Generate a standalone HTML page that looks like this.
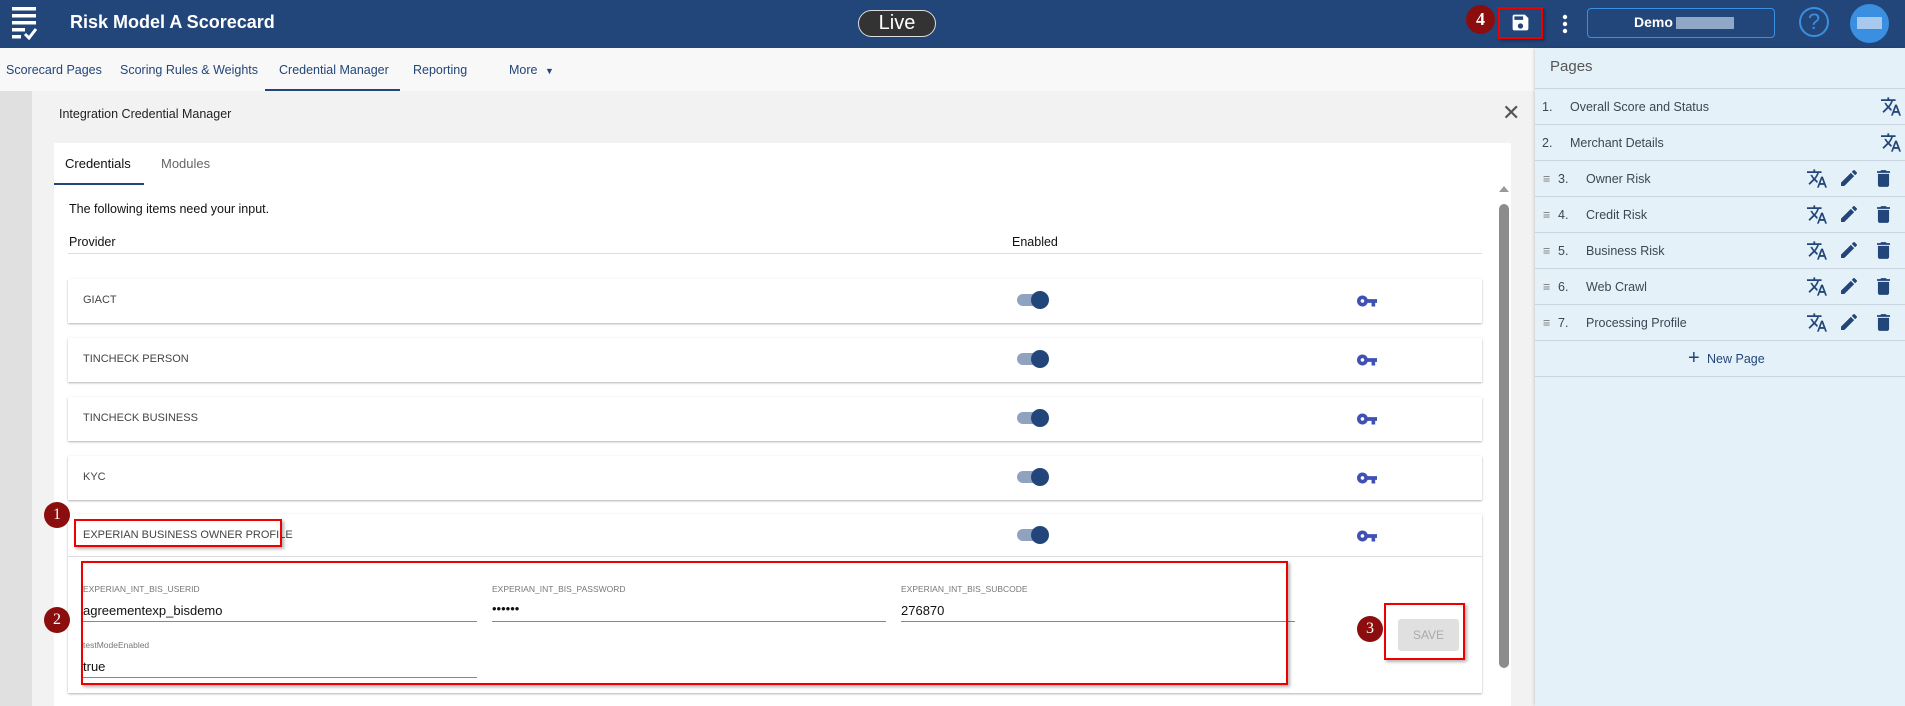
<!DOCTYPE html>
<html><head><meta charset="utf-8"><style>
*{box-sizing:border-box;margin:0;padding:0}
body{width:1905px;height:706px;overflow:hidden;font-family:"Liberation Sans",sans-serif;background:#f2f2f2;position:relative;color:#222}
.a{position:absolute}
.hdr{left:0;top:0;width:1905px;height:48px;background:#23467a}
.tabs{left:0;top:48px;width:1535px;height:43px;background:#f8f8f8}
.tab{position:absolute;top:63px;font-size:12.5px;color:#23467a;white-space:nowrap}
.card{position:absolute;left:68px;width:1414px;background:#fff;box-shadow:0 1px 2px rgba(0,0,0,.3)}
.card .n{position:absolute;left:15px;top:15px;font-size:11px;color:#444}
.tg{position:absolute;left:949px;width:32px;height:18px}
.tg:before{content:"";position:absolute;left:0;top:3px;width:28px;height:12px;border-radius:6px;background:#8fa3c0}
.tg:after{content:"";position:absolute;left:14px;top:0;width:18px;height:18px;border-radius:50%;background:#23467a}
.key{position:absolute;left:1289px}
.pr{position:absolute;left:1535px;width:370px;height:36px;border-bottom:1px solid #c9d6df;font-size:12.5px;color:#3c4654}
.pr span{position:absolute;top:11px}
.lbl{position:absolute;font-size:8.5px;color:#777}
.val{position:absolute;font-size:13px;color:#111}
.ul{position:absolute;height:1px;background:#888}
.red{position:absolute;border:2px solid #e00;box-shadow:2px 2px 3px rgba(0,0,0,.3)}
.bd{position:absolute;width:26px;height:26px;border-radius:50%;background:#8b0d0d;color:#fff;font-size:16px;text-align:center;line-height:26px;font-family:"Liberation Serif",serif}
</style></head><body>
<div class="a hdr"></div>
<svg class="a" style="left:12px;top:7px" width="32" height="34" viewBox="0 0 32 34"><g fill="#fff"><rect x="0" y="0" width="24" height="3.5"/><rect x="0" y="7" width="24" height="3.5"/><rect x="0" y="14" width="24" height="3.5"/><rect x="0" y="21" width="13" height="3.5"/><rect x="0" y="28" width="9" height="3.5"/></g><path d="M13 27l4 4 7-9" stroke="#fff" stroke-width="3" fill="none"/></svg>
<div class="a" style="left:70px;top:12px;color:#fff;font-size:18px;font-weight:bold">Risk Model A Scorecard</div>
<div class="a" style="left:858px;top:10px;width:78px;height:27px;border-radius:14px;background:#333;border:1px solid #ddd;color:#fff;font-size:20px;text-align:center;line-height:25px">Live</div>
<div class="bd" style="left:1466px;top:5px;width:29px;height:29px;line-height:29px;font-size:18px;font-weight:bold">4</div>
<div class="red" style="left:1498px;top:7px;width:45px;height:32px"></div>
<svg class="a" style="left:1510px;top:12px" width="21" height="21" viewBox="0 0 24 24"><path fill="#fff" d="M17 3H5a2 2 0 0 0-2 2v14a2 2 0 0 0 2 2h14c1.1 0 2-.9 2-2V7l-4-4zm-5 16c-1.66 0-3-1.34-3-3s1.34-3 3-3 3 1.34 3 3-1.34 3-3 3zm3-10H5V5h10v4z"/></svg>
<svg class="a" style="left:1561px;top:14px" width="8" height="20"><circle cx="4" cy="3" r="2.2" fill="#fff"/><circle cx="4" cy="10" r="2.2" fill="#fff"/><circle cx="4" cy="17" r="2.2" fill="#fff"/></svg>
<div class="a" style="left:1587px;top:8px;width:188px;height:30px;border:1.5px solid #3b8fe0;border-radius:4px;color:#fff;font-weight:bold;font-size:14px;line-height:27px;padding-left:46px">Demo<span style="display:inline-block;width:58px;height:12px;background:#8fa8c8;vertical-align:middle;margin-left:3px"></span></div>
<div class="a" style="left:1799px;top:7px;width:30px;height:30px;border:2.5px solid #3b8fe0;border-radius:50%;color:#3b8fe0;font-size:22px;text-align:center;line-height:26px">?</div>
<div class="a" style="left:1850px;top:4px;width:39px;height:39px;border-radius:50%;background:#3b8fe0"><div style="margin:13px 0 0 7px;width:25px;height:12px;background:#a9c8ee"></div></div>

<div class="a tabs"></div>
<div class="tab" style="left:6px">Scorecard Pages</div>
<div class="tab" style="left:120px">Scoring Rules &amp; Weights</div>
<div class="tab" style="left:279px">Credential Manager</div>
<div class="tab" style="left:413px">Reporting</div>
<div class="tab" style="left:509px">More <span style="font-size:9px;margin-left:4px">▼</span></div>
<div class="a" style="left:265px;top:89px;width:135px;height:2px;background:#23467a"></div>

<div class="a" style="left:0;top:91px;width:32px;height:615px;background:#e0e0e0"></div>
<div class="a" style="left:59px;top:107px;font-size:12.5px;color:#222">Integration Credential Manager</div>
<div class="a" style="left:1502px;top:100px;font-size:22px;color:#555;font-weight:300">✕</div>
<div class="a" style="left:54px;top:143px;width:1457px;height:563px;background:#fff"></div>
<div class="a" style="left:65px;top:156px;font-size:13px;color:#111">Credentials</div>
<div class="a" style="left:161px;top:156px;font-size:13px;color:#666">Modules</div>
<div class="a" style="left:54px;top:183px;width:90px;height:2px;background:#23467a"></div>
<div class="a" style="left:69px;top:202px;font-size:12.5px;color:#111">The following items need your input.</div>
<div class="a" style="left:69px;top:235px;font-size:12.5px;color:#111">Provider</div>
<div class="a" style="left:1012px;top:235px;font-size:12.5px;color:#111">Enabled</div>
<div class="a" style="left:68px;top:253px;width:1414px;height:1px;background:#ddd"></div>

<div class="card" style="top:279px;height:44px"><div class="n">GIACT</div><div class="tg" style="top:12px"></div><svg class="key" style="top:13px" width="20" height="18" viewBox="1 6 22 12"><path fill="#3f51b5" d="M12.65 10C11.83 7.670 9.61 6 7 6c-3.31 0-6 2.69-6 6s2.69 6 6 6c2.61 0 4.83-1.67 5.65-4H17v4h4v-4h2v-4H12.65zM7 14c-1.1 0-2-.9-2-2s.9-2 2-2 2 .9 2 2-.9 2-2 2z"/></svg></div>
<div class="card" style="top:338px;height:44px"><div class="n">TINCHECK PERSON</div><div class="tg" style="top:12px"></div><svg class="key" style="top:13px" width="20" height="18" viewBox="1 6 22 12"><path fill="#3f51b5" d="M12.65 10C11.83 7.67 9.61 6 7 6c-3.31 0-6 2.69-6 6s2.69 6 6 6c2.61 0 4.83-1.67 5.65-4H17v4h4v-4h2v-4H12.65zM7 14c-1.1 0-2-.9-2-2s.9-2 2-2 2 .9 2 2-.9 2-2 2z"/></svg></div>
<div class="card" style="top:397px;height:44px"><div class="n">TINCHECK BUSINESS</div><div class="tg" style="top:12px"></div><svg class="key" style="top:13px" width="20" height="18" viewBox="1 6 22 12"><path fill="#3f51b5" d="M12.65 10C11.83 7.67 9.61 6 7 6c-3.31 0-6 2.69-6 6s2.69 6 6 6c2.61 0 4.83-1.67 5.65-4H17v4h4v-4h2v-4H12.65zM7 14c-1.1 0-2-.9-2-2s.9-2 2-2 2 .9 2 2-.9 2-2 2z"/></svg></div>
<div class="card" style="top:456px;height:44px"><div class="n">KYC</div><div class="tg" style="top:12px"></div><svg class="key" style="top:13px" width="20" height="18" viewBox="1 6 22 12"><path fill="#3f51b5" d="M12.65 10C11.83 7.67 9.61 6 7 6c-3.31 0-6 2.69-6 6s2.69 6 6 6c2.61 0 4.83-1.67 5.65-4H17v4h4v-4h2v-4H12.65zM7 14c-1.1 0-2-.9-2-2s.9-2 2-2 2 .9 2 2-.9 2-2 2z"/></svg></div>
<div class="card" style="top:514px;height:179px"><div class="n" style="top:15px">EXPERIAN BUSINESS OWNER PROFILE</div><div class="tg" style="top:12px"></div><svg class="key" style="top:13px" width="20" height="18" viewBox="1 6 22 12"><path fill="#3f51b5" d="M12.65 10C11.83 7.67 9.61 6 7 6c-3.31 0-6 2.69-6 6s2.69 6 6 6c2.61 0 4.83-1.67 5.65-4H17v4h4v-4h2v-4H12.65zM7 14c-1.1 0-2-.9-2-2s.9-2 2-2 2 .9 2 2-.9 2-2 2z"/></svg><div style="position:absolute;left:0;top:42px;width:1414px;height:1px;background:#ddd"></div></div>

<div class="lbl" style="left:83px;top:584px">EXPERIAN_INT_BIS_USERID</div>
<div class="val" style="left:83px;top:603px">agreementexp_bisdemo</div>
<div class="ul" style="left:83px;top:621px;width:394px"></div>
<div class="lbl" style="left:492px;top:584px">EXPERIAN_INT_BIS_PASSWORD</div>
<div class="val" style="left:492px;top:601px">••••••</div>
<div class="ul" style="left:492px;top:621px;width:394px"></div>
<div class="lbl" style="left:901px;top:584px">EXPERIAN_INT_BIS_SUBCODE</div>
<div class="val" style="left:901px;top:603px">276870</div>
<div class="ul" style="left:901px;top:621px;width:394px"></div>
<div class="lbl" style="left:83px;top:640px">testModeEnabled</div>
<div class="val" style="left:83px;top:659px">true</div>
<div class="ul" style="left:83px;top:677px;width:394px"></div>
<div class="a" style="left:1398px;top:619px;width:61px;height:32px;background:#e0e0e0;border-radius:3px;color:#aaa;font-size:12px;text-align:center;line-height:32px">SAVE</div>

<div class="red" style="left:74px;top:519px;width:208px;height:28px"></div>
<div class="bd" style="left:44px;top:502px">1</div>
<div class="red" style="left:81px;top:561px;width:1207px;height:124px"></div>
<div class="bd" style="left:44px;top:607px">2</div>
<div class="red" style="left:1384px;top:603px;width:81px;height:57px"></div>
<div class="bd" style="left:1357px;top:616px">3</div>

<div class="a" style="left:1499px;top:186px;width:0;height:0;border-left:5px solid transparent;border-right:5px solid transparent;border-bottom:6px solid #999"></div>
<div class="a" style="left:1499px;top:204px;width:10px;height:464px;background:#8c8c8c;border-radius:5px"></div>

<div class="a" style="left:1535px;top:48px;width:370px;height:658px;background:#e5f1f8;box-shadow:-1px 0 3px rgba(0,0,0,.15)"></div>
<div class="a" style="left:1550px;top:58px;font-size:15px;color:#555">Pages</div>
<div class="a" style="left:1535px;top:88px;width:370px;height:1px;background:#c9d6df"></div>
<svg width="0" height="0" style="position:absolute"><defs>
<symbol id="tr" viewBox="1 2 22 20"><path fill="#23467a" d="M12.87 15.07l-2.54-2.51.03-.03c1.74-1.94 2.98-4.17 3.71-6.53H17V4h-7V2H8v2H1v1.99h11.17C11.5 7.92 10.44 9.75 9 11.35 8.07 10.32 7.3 9.19 6.69 8h-2c.73 1.63 1.73 3.17 2.98 4.56l-5.09 5.02L4 19l5-5 3.11 3.11.76-2.04zM18.5 10h-2L12 22h2l1.12-3h4.75L21 22h2l-4.5-12zm-2.62 7l1.62-4.33L19.12 17h-3.24z"/></symbol>
<symbol id="pe" viewBox="3 3 18 18"><path fill="#23467a" d="M3 17.25V21h3.75L17.81 9.94l-3.75-3.75L3 17.25zM20.71 7.04a1 1 0 0 0 0-1.41l-2.34-2.34a1 1 0 0 0-1.41 0l-1.83 1.83 3.75 3.75 1.83-1.83z"/></symbol>
<symbol id="tc" viewBox="5 3 14 18"><path fill="#23467a" d="M6 19c0 1.1.9 2 2 2h8c1.1 0 2-.9 2-2V7H6v12zM19 4h-3.5l-1-1h-5l-1 1H5v2h14V4z"/></symbol>
</defs></svg>
<div class="pr" style="top:89px"><span style="left:7px">1.</span><span style="left:35px">Overall Score and Status</span><svg style="position:absolute;left:346px;top:8px" width="20" height="19"><use href="#tr"/></svg></div>
<div class="pr" style="top:125px"><span style="left:7px">2.</span><span style="left:35px">Merchant Details</span><svg style="position:absolute;left:346px;top:8px" width="20" height="19"><use href="#tr"/></svg></div>
<div class="pr" style="top:161px"><span style="left:8px;color:#777">≡</span><span style="left:23px">3.</span><span style="left:51px">Owner Risk</span><svg style="position:absolute;left:272px;top:8px" width="20" height="19"><use href="#tr"/></svg><svg style="position:absolute;left:306px;top:9px" width="16" height="16"><use href="#pe"/></svg><svg style="position:absolute;left:342px;top:9px" width="13" height="17"><use href="#tc"/></svg></div>
<div class="pr" style="top:197px"><span style="left:8px;color:#777">≡</span><span style="left:23px">4.</span><span style="left:51px">Credit Risk</span><svg style="position:absolute;left:272px;top:8px" width="20" height="19"><use href="#tr"/></svg><svg style="position:absolute;left:306px;top:9px" width="16" height="16"><use href="#pe"/></svg><svg style="position:absolute;left:342px;top:9px" width="13" height="17"><use href="#tc"/></svg></div>
<div class="pr" style="top:233px"><span style="left:8px;color:#777">≡</span><span style="left:23px">5.</span><span style="left:51px">Business Risk</span><svg style="position:absolute;left:272px;top:8px" width="20" height="19"><use href="#tr"/></svg><svg style="position:absolute;left:306px;top:9px" width="16" height="16"><use href="#pe"/></svg><svg style="position:absolute;left:342px;top:9px" width="13" height="17"><use href="#tc"/></svg></div>
<div class="pr" style="top:269px"><span style="left:8px;color:#777">≡</span><span style="left:23px">6.</span><span style="left:51px">Web Crawl</span><svg style="position:absolute;left:272px;top:8px" width="20" height="19"><use href="#tr"/></svg><svg style="position:absolute;left:306px;top:9px" width="16" height="16"><use href="#pe"/></svg><svg style="position:absolute;left:342px;top:9px" width="13" height="17"><use href="#tc"/></svg></div>
<div class="pr" style="top:305px"><span style="left:8px;color:#777">≡</span><span style="left:23px">7.</span><span style="left:51px">Processing Profile</span><svg style="position:absolute;left:272px;top:8px" width="20" height="19"><use href="#tr"/></svg><svg style="position:absolute;left:306px;top:9px" width="16" height="16"><use href="#pe"/></svg><svg style="position:absolute;left:342px;top:9px" width="13" height="17"><use href="#tc"/></svg></div>
<div class="pr" style="top:341px;color:#23467a"><span style="left:153px;top:6px;font-size:20px">+</span><span style="left:172px;top:11px">New Page</span></div>
</body></html>
